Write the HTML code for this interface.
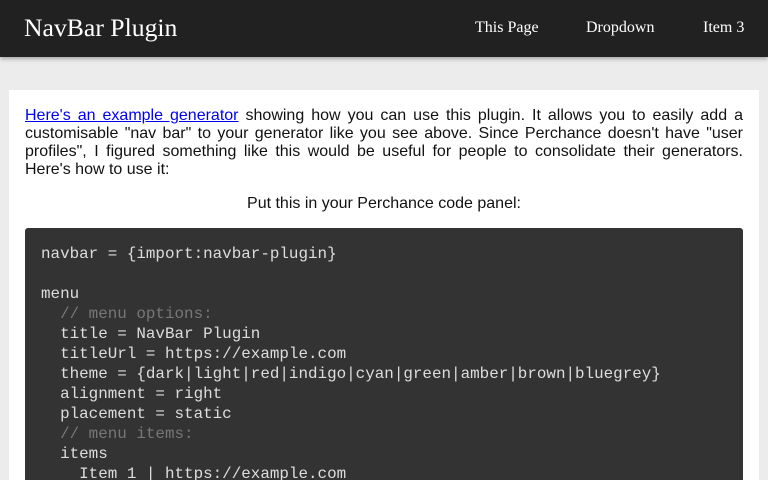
<!DOCTYPE html>
<html style="overflow:hidden;height:480px"><head><style>
body{margin:0;background:#ececec;width:768px;height:480px;overflow:hidden;position:relative;font-family:"Liberation Sans",sans-serif;}
.nav{position:absolute;left:0;top:0;width:768px;height:57px;background:#212121;box-shadow:0 2px 4px rgba(0,0,0,.3);color:#fff;font-family:"Liberation Serif",serif;}
.nav .t{position:absolute;left:24px;top:13px;font-size:25.7px;}
.nav span{position:absolute;top:19px;font-size:16px;}
.card{position:absolute;left:9px;top:90px;width:750px;height:390px;background:#fff;overflow:hidden;}
p{margin:0;position:absolute;left:16px;width:718px;font-size:16px;line-height:18px;color:#111;text-align:justify;}
a{color:#0000ee;}
pre{position:absolute;left:16px;top:138px;width:718px;height:300px;margin:0;background:#333;border-radius:3px;color:#ddd;font-family:"Liberation Mono",monospace;font-size:15.9px;line-height:20px;padding:16px 0 0 16px;box-sizing:border-box;}
.c{color:#777;}
</style></head><body>
<div class="nav"><div class="t">NavBar Plugin</div><span style="left:475px">This Page</span><span style="left:586px">Dropdown</span><span style="left:703px">Item 3</span></div>
<div class="card">
<p style="top:17px"><a href="#">Here's an example generator</a> showing how you can use this plugin. It allows you to easily add a customisable "nav bar" to your generator like you see above. Since Perchance doesn't have "user profiles", I figured something like this would be useful for people to consolidate their generators. Here's how to use it:</p>
<p style="top:105px;text-align:center">Put this in your Perchance code panel:</p>
<pre>navbar = {import:navbar-plugin}

menu
  <span class="c">// menu options:</span>
  title = NavBar Plugin
  titleUrl = https://example.com
  theme = {dark|light|red|indigo|cyan|green|amber|brown|bluegrey}
  alignment = right
  placement = static
  <span class="c">// menu items:</span>
  items
    Item 1 | https://example.com</pre>
</div>
</body></html>
